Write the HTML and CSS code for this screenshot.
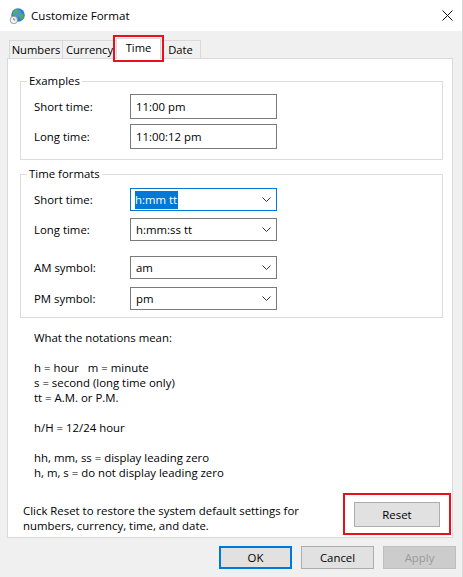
FILE: index.html
```html
<!DOCTYPE html>
<html lang="en">
<head>
<meta charset="utf-8">
<title>Customize Format</title>
<link rel="stylesheet" href="styles.css">
</head>
<body>
<div class="window">
  <div class="titlebar">
    <svg class="app-icon" width="16" height="16" viewBox="0 0 16 16">
      <circle cx="9" cy="7" r="6.8" fill="#2f7fd6"/>
      <circle cx="8" cy="5.5" r="4.2" fill="#5aa3ea" opacity=".6"/>
      <path d="M6.2 1.4C8.4 1 9.8 2.8 8.8 4.4C7.8 5.8 6 5.6 5.4 7.6C4.2 6.6 3.4 4 6.2 1.4Z" fill="#55b046"/>
      <path d="M11.2 5.4C13.4 4.8 15.2 6.6 14.6 8.8C14 11.2 11.8 12.4 11 10.4C10.4 8.9 10.3 6.6 11.2 5.4Z" fill="#55b046"/>
      <circle cx="4.8" cy="12" r="3.7" fill="#f2f2f2" stroke="#8c8c8c" stroke-width=".8"/>
      <path d="M4.8 10.1V12H6.3" stroke="#555" stroke-width=".7" fill="none"/>
    </svg>
    <span class="title">Customize Format</span>
    <svg class="close" width="11" height="11" viewBox="0 0 11 11">
      <path d="M0.5 0.5L10.5 10.5M10.5 0.5L0.5 10.5" stroke="#111" stroke-width="1"/>
    </svg>
  </div>
  <div class="body">
    <div class="tabs">
      <div class="tab tab-numbers">Numbers</div>
      <div class="tab tab-currency">Currency</div>
      <div class="tab tab-time active">Time</div>
      <div class="tab tab-date">Date</div>
    </div>
    <div class="panel">
      <fieldset class="group group-examples">
        <legend>Examples</legend>
        <div class="row">
          <span class="label">Short time:</span>
          <div class="textbox">11:00 pm</div>
        </div>
        <div class="row row-next">
          <span class="label">Long time:</span>
          <div class="textbox">11:00:12 pm</div>
        </div>
      </fieldset>
      <fieldset class="group group-formats">
        <legend>Time formats</legend>
        <div class="row">
          <span class="label">Short time:</span>
          <div class="combo focused"><span class="combo-text"><span class="selected">h:mm tt</span></span>
            <svg class="chevron" width="9" height="5" viewBox="0 0 9 5"><path d="M0.5 0.5L4.5 4.5L8.5 0.5" stroke="#333" fill="none" stroke-width="1"/></svg></div>
        </div>
        <div class="row row-second">
          <span class="label">Long time:</span>
          <div class="combo"><span class="combo-text">h:mm:ss tt</span>
            <svg class="chevron" width="9" height="5" viewBox="0 0 9 5"><path d="M0.5 0.5L4.5 4.5L8.5 0.5" stroke="#333" fill="none" stroke-width="1"/></svg></div>
        </div>
        <div class="row row-am">
          <span class="label">AM symbol:</span>
          <div class="combo"><span class="combo-text">am</span>
            <svg class="chevron" width="9" height="5" viewBox="0 0 9 5"><path d="M0.5 0.5L4.5 4.5L8.5 0.5" stroke="#333" fill="none" stroke-width="1"/></svg></div>
        </div>
        <div class="row row-pm">
          <span class="label">PM symbol:</span>
          <div class="combo"><span class="combo-text">pm</span>
            <svg class="chevron" width="9" height="5" viewBox="0 0 9 5"><path d="M0.5 0.5L4.5 4.5L8.5 0.5" stroke="#333" fill="none" stroke-width="1"/></svg></div>
        </div>
      </fieldset>
      <div class="notes">
        <p>What the notations mean:</p>
        <p class="gap">h = hour&nbsp;&nbsp;&nbsp;m = minute</p>
        <p>s = second (long time only)</p>
        <p>tt = A.M. or P.M.</p>
        <p class="gap">h/H = 12/24 hour</p>
        <p class="gap">hh, mm, ss = display leading zero</p>
        <p>h, m, s = do not display leading zero</p>
      </div>
      <div class="reset-row">
        <p class="reset-text">Click Reset to restore the system default settings for<br>numbers, currency, time, and date.</p>
        <div class="reset-mark"><button class="btn btn-reset">Reset</button></div>
      </div>
    </div>
    <div class="buttons">
      <button class="btn btn-default">OK</button>
      <button class="btn">Cancel</button>
      <button class="btn btn-disabled">Apply</button>
    </div>
  </div>
</div>
</body>
</html>
```
FILE: styles.css
```css
* { box-sizing: border-box; }
html, body { margin: 0; padding: 0; }
body {
  width: 463px;
  height: 577px;
  overflow: hidden;
  font-family: "Open Sans", "Noto Sans", sans-serif;
  font-size: 11.4px;
  color: #000;
  background: #f0f0f0;
}
.window {
  width: 463px;
  height: 577px;
  display: flex;
  flex-direction: column;
  border-right: 1px solid #dadada;
}
.titlebar {
  height: 31px;
  background: #fff;
  display: flex;
  align-items: center;
  padding-left: 9px;
  padding-right: 9px;
}
.app-icon { flex: none; }
.title {
  margin-left: 6px;
  font-size: 11.6px;
  flex: 1;
  padding-bottom: 1px;
}
.close { flex: none; margin-bottom: 1px; }
.body {
  flex: 1;
  background: #f0f0f0;
  display: flex;
  flex-direction: column;
}
.tabs {
  height: 27px;
  display: flex;
  align-items: flex-end;
  padding-left: 9px;
}
.tab {
  height: 18px;
  line-height: 17px;
  text-align: center;
  border: 1px solid #d9d9d9;
  border-bottom: none;
  background: #f0f0f0;
  font-size: 11.2px;
}
.tab-numbers { width: 54px; }
.tab-currency { width: 55px; margin-left: -1px; }
.tab-time { width: 45px; margin-left: -1px; }
.tab-date { width: 41px; margin-left: -1px; }
.tab.active {
  position: relative;
  z-index: 1;
  height: 21px;
  margin-bottom: -1px;
  background: #fff;
  line-height: 17px;
  padding-bottom: 4px;
  outline: 2px solid #e3121d;
  outline-offset: 1px;
}
.panel {
  height: 480px;
  margin: 0 9px 0 7px;
  border: 1px solid #d9d9d9;
  background: #fff;
  padding: 14px 1px 0 12px;
  display: flex;
  flex-direction: column;
}
.group {
  margin: 0 8px 0 0;
  border: 1px solid #dcdcdc;
  padding: 5px 9px 10px 6px;
  min-width: 0;
}
.group legend {
  padding: 0 2px;
  line-height: 16px;
}
.group-formats {
  margin-top: 6px;
  padding-top: 6px;
  padding-bottom: 7px;
}
.row {
  display: flex;
  align-items: center;
  padding-left: 7px;
}
.row-next { margin-top: 5px; }
.row-second { margin-top: 7px; }
.row-am { margin-top: 15px; }
.row-pm { margin-top: 8px; }
.label {
  width: 96px;
  flex: none;
}
.textbox {
  width: 147px;
  height: 25px;
  border: 1px solid #7a7a7a;
  background: #fff;
  padding-left: 5px;
  line-height: 23px;
}
.combo {
  width: 147px;
  height: 23px;
  border: 1px solid #7a7a7a;
  background: #fff;
  padding: 0 4px 0 5px;
  display: flex;
  align-items: center;
}
.combo.focused { border-color: #0078d7; }
.combo-text { flex: 1; line-height: 21px; }
.selected {
  background: #0078d7;
  color: #fff;
  padding: 1px 1px 2px 0;
  margin-left: -1px;
}
.chevron { flex: none; margin-right: 1px; }
.notes {
  margin-top: 12px;
  padding-left: 14px;
  line-height: 15px;
}
.notes p { margin: 0; }
.notes p.gap { margin-top: 15px; }
.reset-row {
  margin-top: 13px;
  display: flex;
  justify-content: space-between;
  align-items: flex-start;
}
.reset-text {
  margin: 10px 0 0 3px;
  line-height: 15px;
}
.reset-mark {
  border: 2px solid #e3121d;
  padding: 7px 9px 6px 9px;
}
.btn {
  font-family: inherit;
  font-size: inherit;
  color: #000;
  background: #e1e1e1;
  border: 1px solid #adadad;
  width: 73px;
  height: 23px;
  padding: 0;
  margin: 0;
}
.btn-reset {
  width: 86px;
  height: 25px;
}
.btn-default { border: 2px solid #0078d7; }
.btn-disabled {
  background: #cccccc;
  border-color: #bfbfbf;
  color: #9a9a9a;
}
.buttons {
  margin-top: 8px;
  display: flex;
  justify-content: flex-end;
  gap: 9px;
  padding-right: 6px;
}
```
